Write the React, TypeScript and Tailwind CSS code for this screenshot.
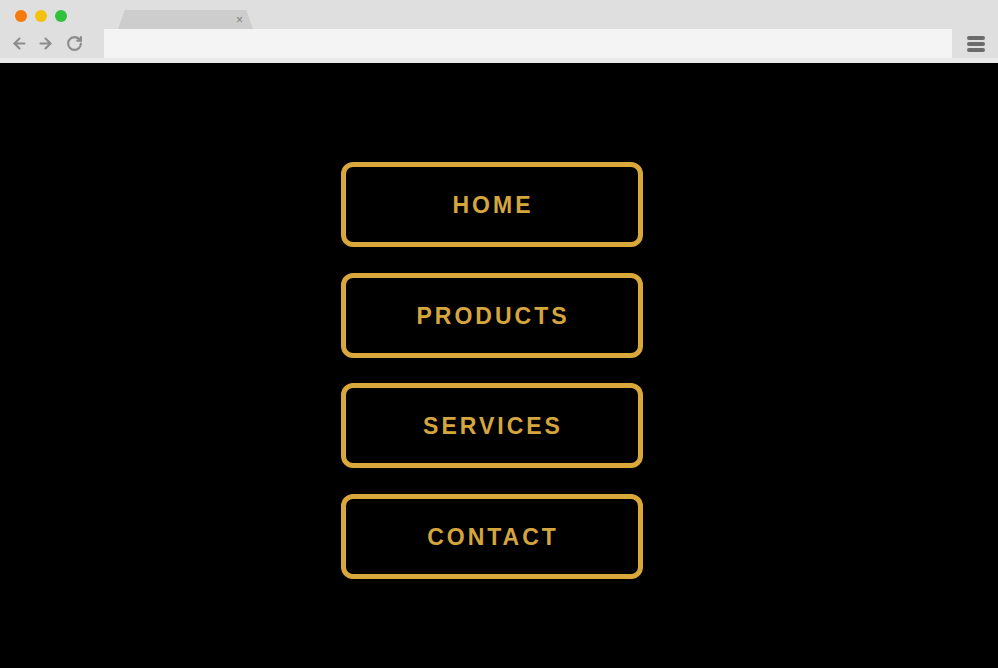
import { ArrowLeft, ArrowRight, RotateCw } from 'lucide-react';

const links = ['HOME', 'PRODUCTS', 'SERVICES', 'CONTACT'];

const BrowserBar = () => (
  <div className="h-[63px] bg-[#dfdfdf] flex flex-col border-b-[5px] border-[#e9e9e9]">
    <div className="h-[29px] flex items-end relative">
      <div className="absolute left-[15px] top-[10px] flex gap-[8px]">
        <span className="w-[12px] h-[12px] rounded-full bg-[#f8790c]" />
        <span className="w-[12px] h-[12px] rounded-full bg-[#f4c20d]" />
        <span className="w-[12px] h-[12px] rounded-full bg-[#2ec33a]" />
      </div>
      <div className="ml-[118px] w-[135px] h-[19px] bg-[#cdcdcd] [clip-path:polygon(5%_0,95%_0,100%_100%,0_100%)] flex items-center justify-end pr-[10px]">
        <span className="text-[12px] leading-none text-[#7d7d7d] font-['Liberation_Sans',sans-serif]">×</span>
      </div>
    </div>
    <div className="flex-1 flex items-stretch">
      <div className="w-[104px] flex items-center pl-[11px] gap-[9px] text-[#8c8c8c]">
        <ArrowLeft className="w-[17px] h-[17px]" strokeWidth={3} />
        <ArrowRight className="w-[17px] h-[17px]" strokeWidth={3} />
        <RotateCw className="w-[17px] h-[17px] ml-[3px]" strokeWidth={3} />
      </div>
      <div className="w-[848px] bg-[#f4f4f4]" />
      <div className="flex-1 flex flex-col items-center justify-center gap-[2px] pl-[2px]">
        <span className="w-[18px] h-[4px] rounded-full bg-[#6b6b6b]" />
        <span className="w-[18px] h-[4px] rounded-full bg-[#6b6b6b]" />
        <span className="w-[18px] h-[4px] rounded-full bg-[#6b6b6b]" />
      </div>
    </div>
  </div>
);

const App = () => {
  return (
    <div className="min-h-screen bg-black flex flex-col">
      <BrowserBar />
      <nav className="flex-1 flex flex-col items-center pt-[99px] gap-[25.5px] pr-[15px]">
        {links.map(l => (
          <a
            key={l}
            href="#"
            className="w-[302px] h-[85px] border-[5px] border-[#d9a73a] rounded-[12px] flex items-center justify-center text-[23px] font-bold tracking-[3px] text-[#d6a63e] font-['Liberation_Sans',Arial,sans-serif]"
          >
            <span className="pl-[3px] mt-[2px]">{l}</span>
          </a>
        ))}
      </nav>
    </div>
  );
};

export default App;
